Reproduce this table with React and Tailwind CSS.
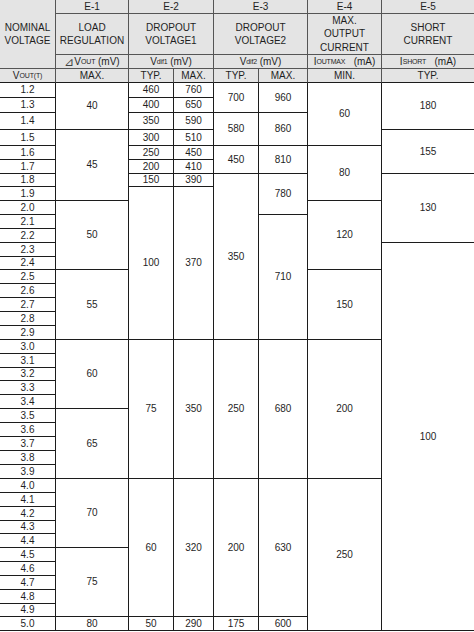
import React from "react";

// rows of the data part, in table order; [text, span class] for merged cells
const rows = [
  ["1.2", ["40", "row-span-3"], "460", "760", ["700", "row-span-2"], ["960", "row-span-2"], ["60", "row-span-4"], ["180", "row-span-3"]],
  ["1.3", "400", "650"],
  ["1.4", "350", "590", ["580", "row-span-2"], ["860", "row-span-2"]],
  ["1.5", ["45", "row-span-5"], "300", "510", ["155", "row-span-3"]],
  ["1.6", "250", "450", ["450", "row-span-2"], ["810", "row-span-2"], ["80", "row-span-4"]],
  ["1.7", "200", "410"],
  ["1.8", "150", "390", ["350", "row-span-12"], ["780", "row-span-3"], ["130", "row-span-5"]],
  ["1.9", ["100", "row-span-11"], ["370", "row-span-11"]],
  ["2.0", ["50", "row-span-5"], ["120", "row-span-5"]],
  ["2.1", ["710", "row-span-9"]],
  ["2.2"],
  ["2.3", ["100", "row-span-28"]],
  ["2.4"],
  ["2.5", ["55", "row-span-5"], ["150", "row-span-5"]],
  ["2.6"],
  ["2.7"],
  ["2.8"],
  ["2.9"],
  ["3.0", ["60", "row-span-5"], ["75", "row-span-10"], ["350", "row-span-10"], ["250", "row-span-10"], ["680", "row-span-10"], ["200", "row-span-10"]],
  ["3.1"],
  ["3.2"],
  ["3.3"],
  ["3.4"],
  ["3.5", ["65", "row-span-5"]],
  ["3.6"],
  ["3.7"],
  ["3.8"],
  ["3.9"],
  ["4.0", ["70", "row-span-5"], ["60", "row-span-10"], ["320", "row-span-10"], ["200", "row-span-10"], ["630", "row-span-10"], ["250", "row-span-11"]],
  ["4.1"],
  ["4.2"],
  ["4.3"],
  ["4.4"],
  ["4.5", ["75", "row-span-5"]],
  ["4.6"],
  ["4.7"],
  ["4.8"],
  ["4.9"],
  ["5.0", "80", "50", "290", "175", "600"],
];

function Cell({ children, className = "", head }) {
  return (
    <div
      className={`flex items-center justify-center text-center border-r border-b leading-[13.5px] ${
        head ? "bg-[#e4e4e4] border-[#555]" : "bg-white border-[#1c1c1c]"
      } ${className}`}
    >
      {children}
    </div>
  );
}

function Sub({ children }) {
  return <span className="text-[7px] tracking-tight">{children}</span>;
}

export default function App() {
  return (
    <div className="w-[474px] h-[632px] overflow-hidden bg-white text-[#1f1f1f] font-['Liberation_Sans',Arial,sans-serif] text-[10px]">
      <div className="grid grid-cols-[56px_73px_45px_40px_45px_49px_74px_93px] grid-rows-[14px_41px_14px_14px_15px_15px_17px_16px_14px_14px_13px_14px_14px_14px_14px_14px_13px_14px_14px_14px_14px_14px_14px_14px_13px_14px_14px_14px_14px_14px_14px_14px_14px_14px_14px_13px_14px_14px_14px_14px_14px_13px_14px_14px_14px_16px]">
        {/* header */}
        <Cell head className="row-span-3">
          NOMINAL
          <br />
          VOLTAGE
        </Cell>
        <Cell head>E-1</Cell>
        <Cell head className="col-span-2">E-2</Cell>
        <Cell head className="col-span-2">E-3</Cell>
        <Cell head>E-4</Cell>
        <Cell head>E-5</Cell>

        <Cell head>
          LOAD
          <br />
          REGULATION
        </Cell>
        <Cell head className="col-span-2">
          DROPOUT
          <br />
          VOLTAGE1
        </Cell>
        <Cell head className="col-span-2">
          DROPOUT
          <br />
          VOLTAGE2
        </Cell>
        <Cell head>
          MAX.
          <br />
          OUTPUT
          <br />
          CURRENT
        </Cell>
        <Cell head>
          SHORT
          <br />
          CURRENT
        </Cell>

        <Cell head>
          <span className="font-['DejaVu_Sans',sans-serif] text-[12px] leading-[12px] text-[#444]">⊿</span>V<Sub>OUT</Sub>&nbsp;(mV)
        </Cell>
        <Cell head className="col-span-2">
          V<Sub>dif1</Sub>&nbsp;(mV)
        </Cell>
        <Cell head className="col-span-2">
          V<Sub>dif2</Sub>&nbsp;(mV)
        </Cell>
        <Cell head>
          I<Sub>OUTMAX</Sub>&nbsp;&nbsp;&nbsp;(mA)
        </Cell>
        <Cell head>
          I<Sub>SHORT</Sub>&nbsp;&nbsp;&nbsp;(mA)
        </Cell>

        <Cell head className="border-b-[#1c1c1c]">
          V<Sub>OUT(T)</Sub>
        </Cell>
        <Cell head className="border-b-[#1c1c1c]">MAX.</Cell>
        <Cell head className="border-b-[#1c1c1c]">TYP.</Cell>
        <Cell head className="border-b-[#1c1c1c]">MAX.</Cell>
        <Cell head className="border-b-[#1c1c1c]">TYP.</Cell>
        <Cell head className="border-b-[#1c1c1c]">MAX.</Cell>
        <Cell head className="border-b-[#1c1c1c]">MIN.</Cell>
        <Cell head className="border-b-[#1c1c1c]">TYP.</Cell>

        {/* data */}
        {rows.map((row) =>
          row.map((c, i) => {
            const [text, span] = Array.isArray(c) ? c : [c, ""];
            return (
              <Cell key={row[0] + "-" + i} className={span}>
                {text}
              </Cell>
            );
          })
        )}
      </div>
    </div>
  );
}
